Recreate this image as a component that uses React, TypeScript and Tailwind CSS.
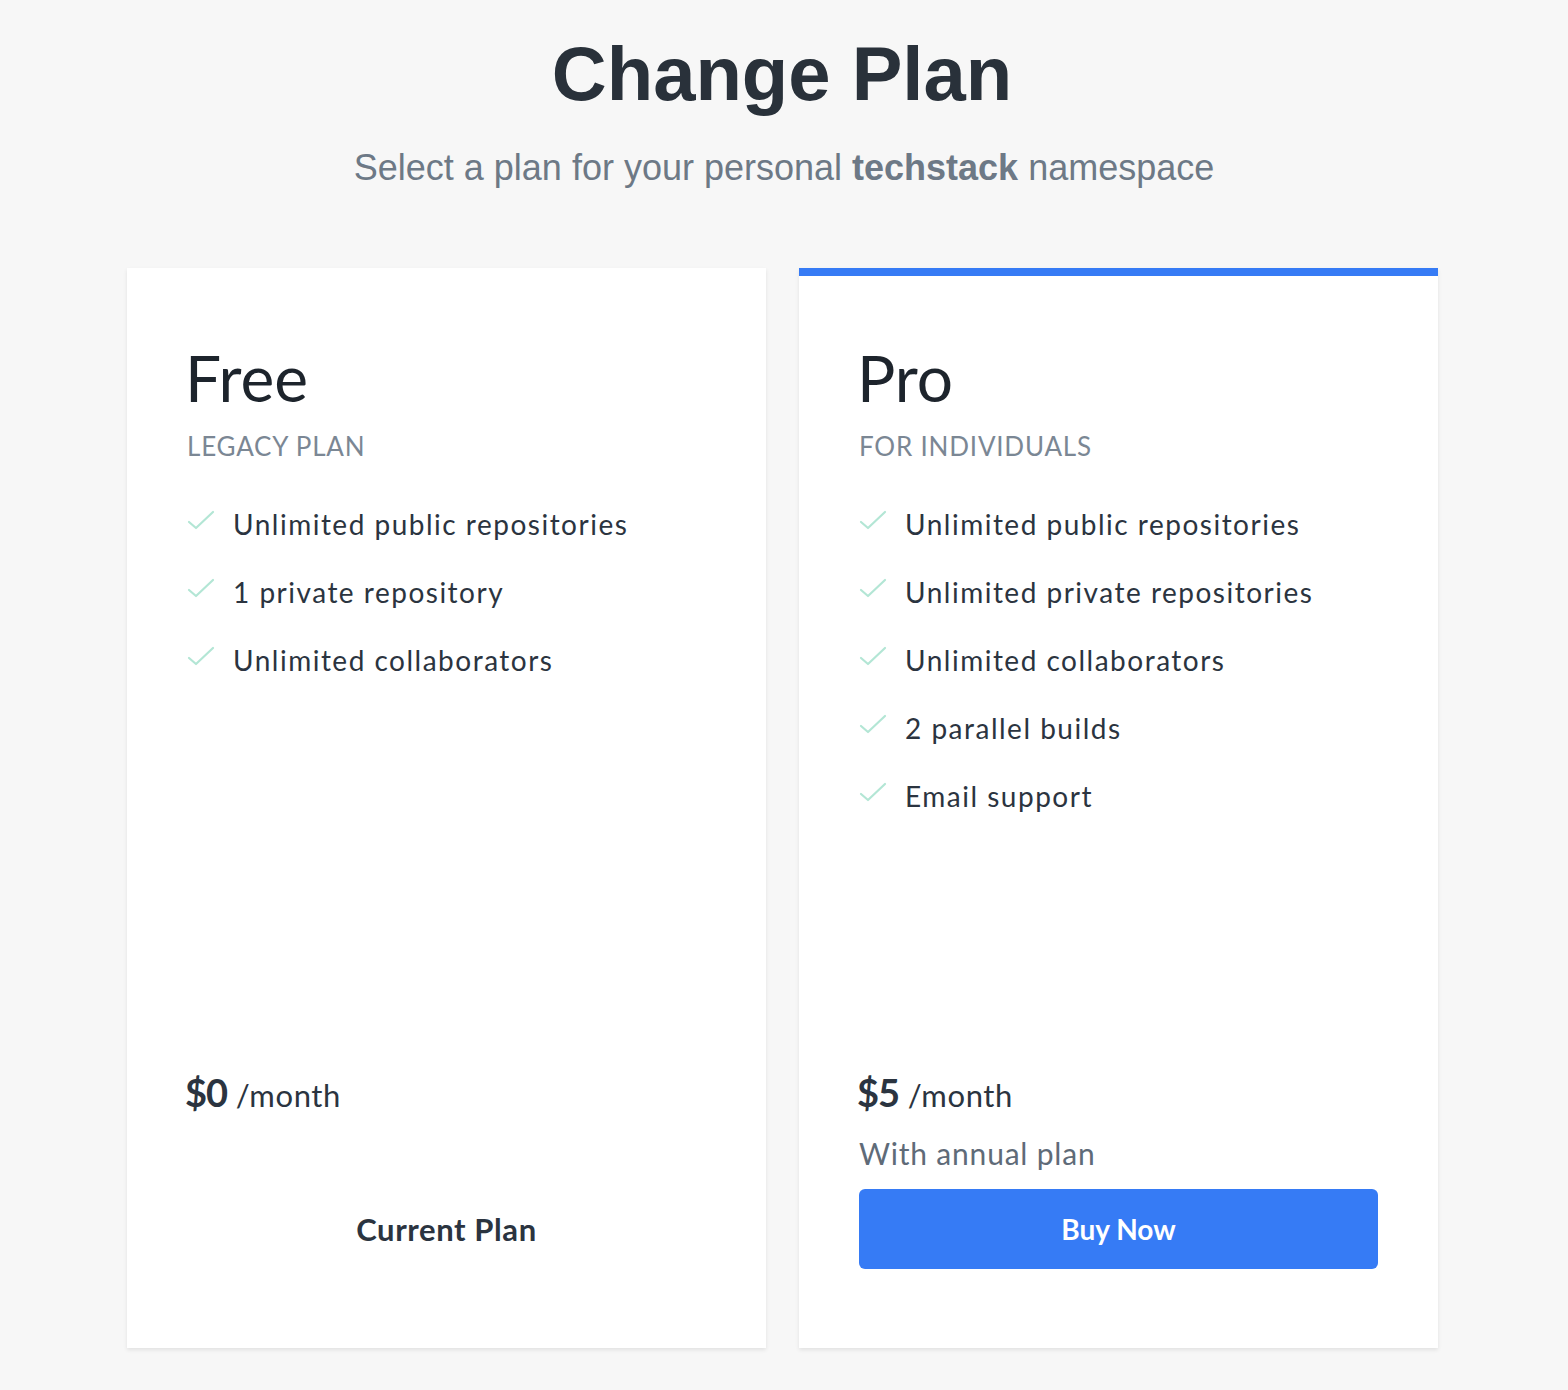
import React from 'react';

const Check = () => (
  <svg width="28" height="28" viewBox="0 0 28 28" fill="none" className="shrink-0 mt-[-6px]">
    <polyline points="2,15 9,21 26,5" stroke="#b3e6d5" strokeWidth="2.2" strokeLinecap="round" strokeLinejoin="round" />
  </svg>
);

type Plan = {
  name: string;
  tag: string;
  features: string[];
  price: string;
  note?: string;
  current?: boolean;
  highlight?: boolean;
};

const plans: Plan[] = [
  {
    name: 'Free',
    tag: 'LEGACY PLAN',
    features: ['Unlimited public repositories', '1 private repository', 'Unlimited collaborators'],
    price: '$0',
    current: true,
  },
  {
    name: 'Pro',
    tag: 'FOR INDIVIDUALS',
    features: [
      'Unlimited public repositories',
      'Unlimited private repositories',
      'Unlimited collaborators',
      '2 parallel builds',
      'Email support',
    ],
    price: '$5',
    note: 'With annual plan',
    highlight: true,
  },
];

const PlanCard = ({ plan }: { plan: Plan }) => (
  <div
    className={
      'bg-white flex flex-col px-[60px] pb-[79px] shadow-[0_2px_4px_rgba(0,0,0,0.09)] ' +
      (plan.highlight ? 'border-t-8 border-[#367bf5] pt-[66px]' : 'pt-[74px]')
    }
  >
    <h2 className="text-[64px] leading-[72px] text-[#1d242c] ml-[-2px]">{plan.name}</h2>
    <p className="mt-[16px] text-[26px] leading-[32px] tracking-[0.8px] text-[#7b8794]">{plan.tag}</p>
    <ul className="mt-[42px] flex flex-col gap-[28px]">
      {plan.features.map((f) => (
        <li key={f} className="flex items-center gap-[18px] text-[28px] leading-[40px] tracking-[1.5px] text-[#2b3440]">
          <Check />
          <span>{f}</span>
        </li>
      ))}
    </ul>
    <div className="mt-auto pt-[40px]">
      <p className="text-[#2b3440] leading-[44px] ml-[-2px]">
        <span className="text-[38px] font-bold tracking-[-1px]">{plan.price}</span>
        <span className="text-[31px] tracking-[0.6px]"> /month</span>
      </p>
      {plan.note ? (
        <p className="mt-[10px] text-[30px] leading-[40px] tracking-[0.8px] text-[#5f6b78]">{plan.note}</p>
      ) : (
        <div className="h-[50px]" />
      )}
      <button
        className={
          'mt-[16px] w-full h-[80px] rounded-[6px] font-bold ' +
          (plan.current ? 'text-[31px] tracking-[0.6px] text-[#2b3440]' : 'text-[28px] bg-[#367bf5] text-white')
        }
      >
        {plan.current ? 'Current Plan' : 'Buy Now'}
      </button>
    </div>
  </div>
);

export default function App() {
  return (
    <div className="min-h-[1390px] bg-[#f7f7f7] pt-[28px]" style={{ fontFamily: 'Lato, "Noto Sans", sans-serif' }}>
      <div className="text-center">
        <h1
          className="text-[76px] leading-[92px] font-bold text-[#29313a] mr-[4px]"
          style={{ fontFamily: '"Liberation Sans", Arial, sans-serif' }}
        >
          Change Plan
        </h1>
        <p
          className="mt-[26px] text-[36px] leading-[44px] text-[#6d7986]"
          style={{ fontFamily: '"Liberation Sans", Arial, sans-serif' }}
        >
          Select a plan for your personal <span className="font-bold">techstack</span> namespace
        </p>
      </div>
      <div className="ml-[127px] mt-[78px] w-[1311px] grid grid-cols-2 gap-[33px] h-[1080px]">
        {plans.map((p) => (
          <PlanCard key={p.name} plan={p} />
        ))}
      </div>
    </div>
  );
}
